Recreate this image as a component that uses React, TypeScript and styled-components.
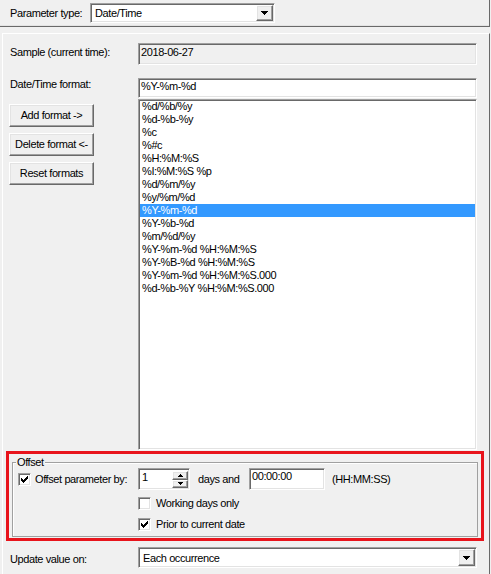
import React from 'react';
import styled, { createGlobalStyle, css } from 'styled-components';

const Global = createGlobalStyle`
  html, body { margin: 0; padding: 0; background: #f0f0f0; }
  body {
    font-family: "Liberation Sans", Arial, sans-serif;
    font-size: 11px;
    line-height: 13px;
    letter-spacing: -0.4px;
    color: #000;
  }
  * { box-sizing: border-box; }
`;

const sunken = css`
  border: 1px solid;
  border-color: #a0a0a0 #ffffff #ffffff #a0a0a0;
  box-shadow: inset 1px 1px 0 #696969, inset -1px -1px 0 #e3e3e3;
`;

const raised = css`
  border: 1px solid;
  border-color: #ffffff #696969 #696969 #ffffff;
  box-shadow: inset -1px -1px 0 #a0a0a0, inset 1px 1px 0 #e3e3e3;
`;

const Screen = styled.div`
  width: 491px;
  height: 574px;
  overflow: hidden;
  display: flex;
  flex-direction: column;
`;

const TopBar = styled.div`
  width: 490px;
  height: 27px;
  flex: none;
  border-bottom: 1px solid #696969;
  border-right: 1px solid #696969;
  box-shadow: inset 0 -1px 0 #e3e3e3;
  display: flex;
  align-items: center;
  padding-left: 10px;
`;

const TopLabel = styled.span`
  width: 80px;
  padding-top: 1px;
`;

const Panel = styled.div`
  margin: 6px 0 0 2px;
  width: 488px;
  flex: 1;
  border-top: 1px solid #ffffff;
  border-left: 1px solid #ffffff;
  border-right: 1px solid #696969;
  padding: 9px 11px 0 7px;
  display: flex;
  flex-direction: column;
`;

const Row = styled.div<{ $top?: number }>`
  display: grid;
  grid-template-columns: 128px 339px;
  margin-top: ${(p) => p.$top ?? 0}px;
`;

const Label = styled.span<{ $pad?: number }>`
  padding-top: ${(p) => p.$pad ?? 0}px;
  white-space: nowrap;
`;

const Field = styled.div<{ $h: number; $bg?: string; $pad?: number }>`
  ${sunken};
  height: ${(p) => p.$h}px;
  background: ${(p) => p.$bg ?? '#ffffff'};
  padding: ${(p) => p.$pad ?? 1}px 2px 0 2px;
  white-space: nowrap;
`;

const ButtonStack = styled.div`
  display: flex;
  flex-direction: column;
  gap: 6px;
  padding-top: 5px;
  margin-left: -1px;
`;

const PushButton = styled.button`
  ${raised};
  width: 85px;
  height: 23px;
  background: #f0f0f0;
  font: inherit;
  letter-spacing: inherit;
  color: #000;
  padding: 0;
  text-align: center;
`;

const ListBox = styled.div`
  ${sunken};
  height: 351px;
  background: #ffffff;
  padding: 0 1px;
  overflow: hidden;
`;

const ListItem = styled.div<{ $selected?: boolean }>`
  height: 13px;
  padding-left: 2px;
  white-space: pre;
  background: ${(p) => (p.$selected ? '#3399ff' : 'transparent')};
  color: ${(p) => (p.$selected ? '#ffffff' : '#000000')};
`;

const Highlight = styled.div`
  margin: 1px -6px 0 -4px;
  height: 90px;
  border: 3px solid #e8141c;
  padding: 8px 3px 0 3px;
`;

const GroupBox = styled.div`
  height: 75px;
  border: 1px solid #a0a0a0;
  box-shadow: inset 1px 1px 0 #ffffff;
`;

const GroupTitle = styled.div`
  width: fit-content;
  margin: -7px 0 0 3px;
  padding: 0 1px;
  background: #f0f0f0;
`;

const OptionRow = styled.div<{ $h: number; $top?: number; $indent: number }>`
  display: flex;
  align-items: center;
  height: ${(p) => p.$h}px;
  margin-top: ${(p) => p.$top ?? 0}px;
  padding-left: ${(p) => p.$indent}px;
`;

const CheckField = styled.label<{ $w?: number; $gap: number }>`
  display: flex;
  align-items: center;
  gap: ${(p) => p.$gap}px;
  width: ${(p) => (p.$w ? `${p.$w}px` : 'auto')};
  white-space: nowrap;
`;

const Box = styled.span`
  ${sunken};
  width: 13px;
  height: 13px;
  background: #ffffff;
  display: block;
  position: relative;
  flex: none;
`;

const CheckSvg = styled.svg`
  position: absolute;
  left: -1px;
  top: -1px;
`;

const Spinner = styled.div`
  ${sunken};
  width: 52px;
  height: 22px;
  background: #ffffff;
  display: flex;
  justify-content: space-between;
  padding: 1px 1px 1px 3px;
`;

const SpinText = styled.span`
  padding-top: 1px;
`;

const SpinColumn = styled.div`
  width: 16px;
  display: flex;
  flex-direction: column;
  padding-top: 1px;
`;

const SpinButton = styled.div`
  ${raised};
  height: 9px;
  background: #f0f0f0;
  display: flex;
  align-items: center;
  justify-content: center;
`;

const InlineText = styled.span<{ $w?: number; $left?: number }>`
  margin-left: ${(p) => p.$left ?? 0}px;
  width: ${(p) => (p.$w ? `${p.$w}px` : 'auto')};
  white-space: nowrap;
`;

const Combo = styled.div<{ $w: number; $h: number }>`
  ${sunken};
  width: ${(p) => p.$w}px;
  height: ${(p) => p.$h}px;
  background: #ffffff;
  display: flex;
  align-items: center;
  padding: 1px 1px 1px 4px;
`;

const ComboText = styled.span`
  flex: 1;
  padding-top: 1px;
  white-space: nowrap;
`;

const DropButton = styled.div<{ $h: number }>`
  ${raised};
  width: 17px;
  height: ${(p) => p.$h}px;
  background: #f0f0f0;
  display: flex;
  align-items: center;
  justify-content: center;
`;

const Arrow = ({ w, h, up }: { w: number; h: number; up?: boolean }) => (
  <svg width={w} height={h} viewBox={`0 0 ${w} ${h}`} shapeRendering="crispEdges">
    <polygon points={up ? `0,${h} ${w},${h} ${w / 2},0` : `0,0 ${w},0 ${w / 2},${h}`} fill="#000" />
  </svg>
);

const tops = [2, 3, 4, 3, 2, 1, 0];

const CheckBox = ({ checked }: { checked?: boolean }) => (
  <Box>
    {checked && (
      <CheckSvg width={13} height={13} viewBox="0 0 13 13" shapeRendering="crispEdges">
        {tops.map((t, c) => (
          <rect key={c} x={3 + c} y={3 + t} width={1} height={3} fill="#000" />
        ))}
      </CheckSvg>
    )}
  </Box>
);

const formats = [
  '%d/%b/%y',
  '%d-%b-%y',
  '%c',
  '%#c',
  '%H:%M:%S',
  '%I:%M:%S %p',
  '%d/%m/%y',
  '%y/%m/%d',
  '%Y-%m-%d',
  '%Y-%b-%d',
  '%m/%d/%y',
  '%Y-%m-%d %H:%M:%S',
  '%Y-%B-%d %H:%M:%S',
  '%Y-%m-%d %H:%M:%S.000',
  '%d-%b-%Y %H:%M:%S.000',
];

export default function App() {
  return (
    <>
      <Global />
      <Screen>
        <TopBar>
          <TopLabel>Parameter type:</TopLabel>
          <Combo $w={185} $h={20}>
            <ComboText>Date/Time</ComboText>
            <DropButton $h={16}>
              <Arrow w={7} h={4} />
            </DropButton>
          </Combo>
        </TopBar>

        <Panel>
          <Row>
            <Label $pad={3}>Sample (current time):</Label>
            <Field $h={22} $bg="#f0f0f0" $pad={2}>
              2018-06-27
            </Field>
          </Row>

          <Row $top={13}>
            <Label $pad={0}>Date/Time format:</Label>
            <Field $h={20}>%Y-%m-%d</Field>
          </Row>

          <Row $top={1}>
            <ButtonStack>
              <PushButton>Add format -&gt;</PushButton>
              <PushButton>Delete format &lt;-</PushButton>
              <PushButton>Reset formats</PushButton>
            </ButtonStack>
            <ListBox>
              {formats.map((f, i) => (
                <ListItem key={f} $selected={i === 8}>
                  {f}
                </ListItem>
              ))}
            </ListBox>
          </Row>

          <Highlight>
            <GroupBox>
              <GroupTitle>Offset</GroupTitle>
              <OptionRow $h={22} $top={-1} $indent={5}>
                <CheckField $w={120} $gap={4}>
                  <CheckBox checked />
                  Offset parameter by:
                </CheckField>
                <Spinner>
                  <SpinText>1</SpinText>
                  <SpinColumn>
                    <SpinButton>
                      <Arrow w={5} h={3} up />
                    </SpinButton>
                    <SpinButton>
                      <Arrow w={5} h={3} />
                    </SpinButton>
                  </SpinColumn>
                </Spinner>
                <InlineText $left={8} $w={51}>
                  days and
                </InlineText>
                <Field $h={22} $pad={1} style={{ width: 76 }}>
                  00:00:00
                </Field>
                <InlineText $left={7}>(HH:MM:SS)</InlineText>
              </OptionRow>
              <OptionRow $h={21} $top={3} $indent={125}>
                <CheckField $gap={5}>
                  <CheckBox />
                  Working days only
                </CheckField>
              </OptionRow>
              <OptionRow $h={21} $indent={125}>
                <CheckField $gap={5}>
                  <CheckBox checked />
                  Prior to current date
                </CheckField>
              </OptionRow>
            </GroupBox>
          </Highlight>

          <Row $top={6}>
            <Label $pad={6}>Update value on:</Label>
            <Combo $w={339} $h={21}>
              <ComboText>Each occurrence</ComboText>
              <DropButton $h={17}>
                <Arrow w={7} h={4} />
              </DropButton>
            </Combo>
          </Row>
        </Panel>
      </Screen>
    </>
  );
}
